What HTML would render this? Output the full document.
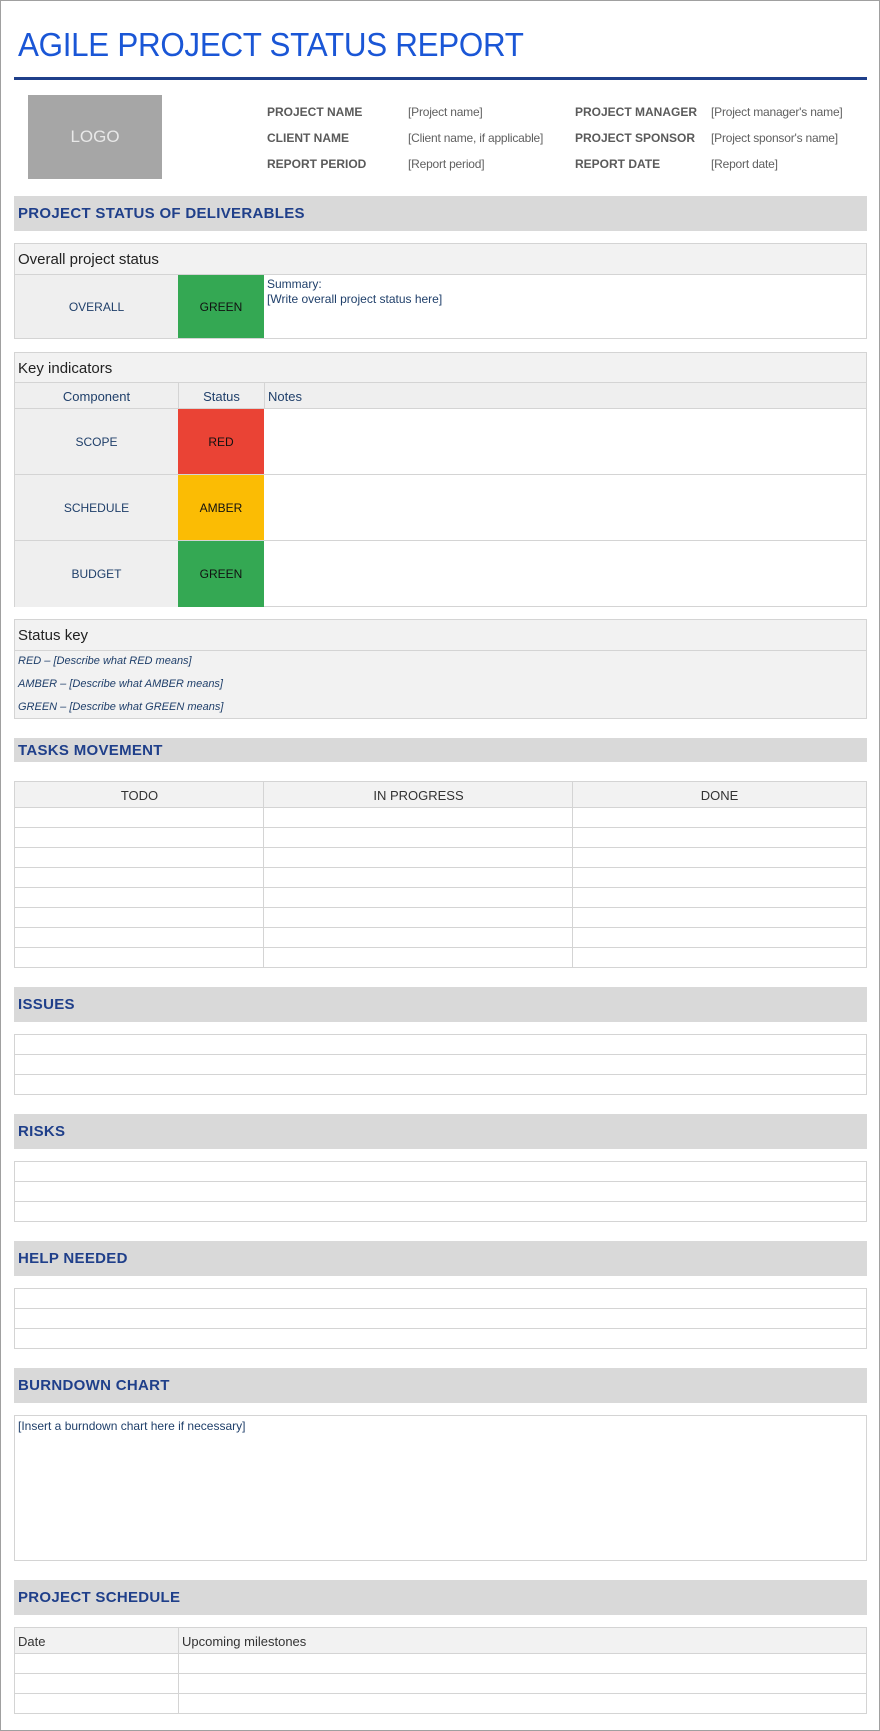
<!DOCTYPE html>
<html><head><meta charset="utf-8"><style>
*{margin:0;padding:0;box-sizing:border-box}
body{width:880px;height:1731px;background:#fff;font-family:"Liberation Sans",sans-serif;position:relative;overflow:hidden}
.frame{position:absolute;left:0;top:0;width:880px;height:1731px;border:1px solid #a0a0a0}
.a{position:absolute}
.title{left:18px;top:26px;font-size:33px;color:#1a56d6;white-space:nowrap;letter-spacing:-0.3px;transform:scaleX(0.95);transform-origin:0 0}
.rule{left:14px;top:77px;width:853px;height:3px;background:#1f3f8a}
.logo{left:28px;top:95px;width:134px;height:84px;background:#a6a6a6;color:#e8e8e8;font-size:17px;display:flex;align-items:center;justify-content:center}
.lbl{font-size:12px;font-weight:bold;color:#5a5a5a;white-space:nowrap;line-height:14px}
.val{font-size:12px;color:#606060;white-space:nowrap;line-height:14px;letter-spacing:-0.2px}
.bar{left:14px;width:853px;background:#d9d9d9;color:#1f3f8a;font-weight:bold;font-size:15px;letter-spacing:0.3px;padding-left:4px;display:flex;align-items:center}
.box{left:14px;width:853px;border:1px solid #d4d4d4}
.cell{position:absolute;display:flex;align-items:center}
.hline{position:absolute;left:0;right:0;height:1px;background:#d4d4d4}
.vline{position:absolute;top:0;bottom:0;width:1px;background:#d4d4d4}
.navy{color:#1f3f6a}
</style></head><body>
<div class="frame"></div>
<div class="a title">AGILE PROJECT STATUS REPORT</div>
<div class="a rule"></div>
<div class="a logo">LOGO</div>

<div class="a lbl" style="left:267px;top:105px">PROJECT NAME</div>
<div class="a val" style="left:408px;top:105px">[Project name]</div>
<div class="a lbl" style="left:575px;top:105px">PROJECT MANAGER</div>
<div class="a val" style="left:711px;top:105px">[Project manager's name]</div>
<div class="a lbl" style="left:267px;top:131px">CLIENT NAME</div>
<div class="a val" style="left:408px;top:131px">[Client name, if applicable]</div>
<div class="a lbl" style="left:575px;top:131px">PROJECT SPONSOR</div>
<div class="a val" style="left:711px;top:131px">[Project sponsor's name]</div>
<div class="a lbl" style="left:267px;top:157px">REPORT PERIOD</div>
<div class="a val" style="left:408px;top:157px">[Report period]</div>
<div class="a lbl" style="left:575px;top:157px">REPORT DATE</div>
<div class="a val" style="left:711px;top:157px">[Report date]</div>

<div class="a bar" style="top:196px;height:35px">PROJECT STATUS OF DELIVERABLES</div>

<div class="a box" style="top:243px;height:96px">
 <div class="cell" style="left:0;top:0;right:0;height:30px;background:#f2f2f2;padding-left:3px;font-size:15px;color:#222">Overall project status</div>
 <div class="hline" style="top:30px"></div>
 <div class="cell navy" style="left:0;top:31px;width:163px;bottom:0;background:#efefef;justify-content:center;font-size:12px">OVERALL</div>
 <div class="cell" style="left:163px;top:31px;width:86px;bottom:0;background:#34a853;justify-content:center;font-size:12px;color:#111">GREEN</div>
 <div class="a navy" style="left:252px;top:33px;font-size:12px;line-height:15px">Summary:<br>[Write overall project status here]</div>
</div>

<div class="a box" style="top:352px;height:255px">
 <div class="cell" style="left:0;top:0;right:0;height:30px;background:#f2f2f2;padding-left:3px;font-size:15px;color:#222">Key indicators</div>
 <div class="hline" style="top:29px"></div>
 <div class="cell navy" style="left:0;top:30px;right:0;height:26px;background:#efefef"></div>
 <div class="cell navy" style="left:0;top:30px;width:163px;height:26px;justify-content:center;font-size:13px">Component</div>
 <div class="cell navy" style="left:163px;top:30px;width:86px;height:26px;justify-content:center;font-size:13px;border-left:1px solid #d4d4d4">Status</div>
 <div class="cell navy" style="left:249px;top:30px;height:26px;padding-left:3px;font-size:13px;border-left:1px solid #d4d4d4">Notes</div>
 <div class="hline" style="top:55px"></div>
 <div class="cell navy" style="left:0;top:56px;width:163px;height:66px;background:#efefef;justify-content:center;font-size:12px">SCOPE</div>
 <div class="cell" style="left:163px;top:56px;width:86px;height:66px;background:#ea4335;justify-content:center;font-size:12px;color:#111">RED</div>
 <div class="hline" style="top:121px"></div>
 <div class="cell navy" style="left:0;top:122px;width:163px;height:66px;background:#efefef;justify-content:center;font-size:12px">SCHEDULE</div>
 <div class="cell" style="left:163px;top:122px;width:86px;height:66px;background:#fbbc04;justify-content:center;font-size:12px;color:#111">AMBER</div>
 <div class="hline" style="top:187px"></div>
 <div class="cell navy" style="left:0;top:188px;width:163px;height:66px;background:#efefef;justify-content:center;font-size:12px">BUDGET</div>
 <div class="cell" style="left:163px;top:188px;width:86px;height:66px;background:#34a853;justify-content:center;font-size:12px;color:#111">GREEN</div>
</div>

<div class="a box" style="top:619px;height:100px;background:#f2f2f2">
 <div class="cell" style="left:0;top:0;right:0;height:30px;padding-left:3px;font-size:15px;color:#222">Status key</div>
 <div class="hline" style="top:30px"></div>
 <div class="a navy" style="left:3px;top:35px;font-size:11px;font-style:italic">RED – [Describe what RED means]</div>
 <div class="a navy" style="left:3px;top:58px;font-size:11px;font-style:italic">AMBER – [Describe what AMBER means]</div>
 <div class="a navy" style="left:3px;top:81px;font-size:11px;font-style:italic">GREEN – [Describe what GREEN means]</div>
</div>

<div class="a bar" style="top:738px;height:24px">TASKS MOVEMENT</div>
<div class="a box" style="top:781px;height:187px">
 <div class="cell" style="left:0;top:0;right:0;height:26px;background:#f2f2f2"></div>
 <div class="cell" style="left:0;top:0;width:249px;height:26px;justify-content:center;font-size:13px;color:#333">TODO</div>
 <div class="cell" style="left:249px;top:0;width:309px;height:26px;justify-content:center;font-size:13px;color:#333">IN PROGRESS</div>
 <div class="cell" style="left:558px;top:0;right:0;height:26px;justify-content:center;font-size:13px;color:#333">DONE</div>
 <div class="vline" style="left:248px"></div><div class="vline" style="left:557px"></div>
 <div class="hline" style="top:25px"></div><div class="hline" style="top:45px"></div><div class="hline" style="top:65px"></div><div class="hline" style="top:85px"></div><div class="hline" style="top:105px"></div><div class="hline" style="top:125px"></div><div class="hline" style="top:145px"></div><div class="hline" style="top:165px"></div>
</div>

<div class="a bar" style="top:987px;height:35px">ISSUES</div>
<div class="a box" style="top:1034px;height:61px"><div class="hline" style="top:19px"></div><div class="hline" style="top:39px"></div></div>
<div class="a bar" style="top:1114px;height:35px">RISKS</div>
<div class="a box" style="top:1161px;height:61px"><div class="hline" style="top:19px"></div><div class="hline" style="top:39px"></div></div>
<div class="a bar" style="top:1241px;height:35px">HELP NEEDED</div>
<div class="a box" style="top:1288px;height:61px"><div class="hline" style="top:19px"></div><div class="hline" style="top:39px"></div></div>
<div class="a bar" style="top:1368px;height:35px">BURNDOWN CHART</div>
<div class="a box" style="top:1415px;height:146px"><div class="a navy" style="left:3px;top:3px;font-size:12px">[Insert a burndown chart here if necessary]</div></div>
<div class="a bar" style="top:1580px;height:35px">PROJECT SCHEDULE</div>
<div class="a box" style="top:1627px;height:87px">
 <div class="cell" style="left:0;top:0;right:0;height:26px;background:#f2f2f2"></div>
 <div class="cell" style="left:3px;top:0;height:26px;font-size:13px;color:#333">Date</div>
 <div class="cell" style="left:167px;top:0;height:26px;font-size:13px;color:#333">Upcoming milestones</div>
 <div class="vline" style="left:163px"></div>
 <div class="hline" style="top:25px"></div><div class="hline" style="top:45px"></div><div class="hline" style="top:65px"></div>
</div>
</body></html>
